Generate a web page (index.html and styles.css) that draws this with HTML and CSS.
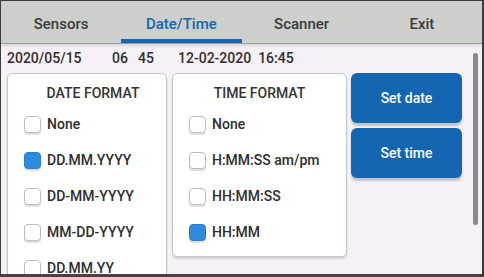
FILE: index.html
```
<!DOCTYPE html>
<html lang="en">
<head>
    <meta charset="UTF-8">
    <meta name="viewport" content="width=device-width, initial-scale=1.0">
    <title>Date/Time settings</title>
    <link rel="stylesheet" href="styles.css">
</head>
<body>
    <div class="frame">
        <div class="tabs">
            <div class="tab">Sensors</div>
            <div class="tab active">Date/Time</div>
            <div class="tab">Scanner</div>
            <div class="tab">Exit</div>
        </div>
        <div class="content">
            <div class="now">
                <span class="now-date">2020/05/15</span>
                <span class="now-hm">06</span>
                <span class="now-hm">45</span>
                <span class="now-full">12-02-2020&nbsp; 16:45</span>
            </div>
            <div class="panels">
                <div class="card date-card">
                    <div class="card-title">DATE FORMAT</div>
                    <label class="option"><span class="box"></span>None</label>
                    <label class="option"><span class="box checked"></span>DD.MM.YYYY</label>
                    <label class="option"><span class="box"></span>DD-MM-YYYY</label>
                    <label class="option"><span class="box"></span>MM-DD-YYYY</label>
                    <label class="option"><span class="box"></span>DD.MM.YY</label>
                </div>
                <div class="card time-card">
                    <div class="card-title">TIME FORMAT</div>
                    <label class="option"><span class="box"></span>None</label>
                    <label class="option"><span class="box"></span>H:MM:SS am/pm</label>
                    <label class="option"><span class="box"></span>HH:MM:SS</label>
                    <label class="option"><span class="box checked"></span>HH:MM</label>
                </div>
                <div class="actions">
                    <button class="action">Set date</button>
                    <button class="action">Set time</button>
                </div>
            </div>
            <div class="scroll-thumb"></div>
        </div>
    </div>
</body>
</html>
```

FILE: styles.css
```
body {
    margin: 0;
    font-family: Roboto, "Liberation Sans", sans-serif;
    color: #333;
}
.frame {
    width: 484px;
    height: 277px;
    box-sizing: border-box;
    border: 1px solid #3c3c3c;
    border-right: 2px solid #3c3c3c;
    border-bottom: 3px solid #444;
    display: flex;
    flex-direction: column;
    overflow: hidden;
    background: #f6f1f6;
}
.tabs {
    display: grid;
    grid-template-columns: repeat(4, 1fr);
    height: 42px;
    background: #cdcfcd;
    border-bottom: 1px solid #9c9e9c;
    box-shadow: 0 2px 3px rgba(0, 0, 0, 0.12);
    position: relative;
    z-index: 1;
}
.tab {
    display: flex;
    justify-content: center;
    align-items: center;
    font-size: 15px;
    font-weight: 500;
    color: #3a3a3a;
    padding: 5px 0 1px;
    box-sizing: border-box;
}
.tab.active {
    color: #1565b0;
    border-bottom: 4px solid #1565b0;
    padding: 8px 0 0;
}
.content {
    flex: 1;
    position: relative;
    padding: 6px 6px 0;
    overflow: hidden;
}
.now {
    display: flex;
    font-size: 14px;
    font-weight: 500;
    line-height: 16px;
    color: #2e2e2e;
}
.now-date {
    width: 105px;
}
.now-hm {
    width: 26px;
}
.now-full {
    margin-left: 14px;
}
.panels {
    display: flex;
    align-items: flex-start;
    margin-top: 7px;
}
.card {
    background: #fff;
    border: 1px solid #c6c6c6;
    border-radius: 5px;
    box-shadow: 0 2px 2px rgba(0, 0, 0, 0.14);
    padding: 11px 0 6px 16px;
}
.date-card {
    width: 142px;
    margin-right: 5px;
}
.time-card {
    width: 157px;
    margin-right: 4px;
}
.card-title {
    text-align: center;
    font-size: 14px;
    font-weight: 500;
    line-height: 16px;
    margin-bottom: 5px;
    padding-right: 16px;
}
.date-card .card-title {
    padding-right: 4px;
}
.option {
    display: flex;
    align-items: center;
    height: 36px;
    font-size: 14px;
    font-weight: 500;
    color: #2e2e2e;
}
.box {
    width: 15px;
    height: 15px;
    border: 1px solid #bdbdbd;
    border-radius: 4px;
    background: #fff;
    box-shadow: 0 2px 1px rgba(0, 0, 0, 0.13);
    margin-right: 6px;
}
.box.checked {
    background: #2f8be0;
    border-color: #2a7ccc;
}
.actions {
    display: flex;
    flex-direction: column;
    gap: 5px;
}
.action {
    width: 111px;
    height: 50px;
    border: none;
    border-radius: 6px;
    background: #1466b2;
    color: #fff;
    font-family: Roboto, "Liberation Sans", sans-serif;
    font-size: 14px;
    font-weight: 500;
    box-shadow: 0 3px 2px rgba(0, 0, 0, 0.2);
}
.scroll-thumb {
    position: absolute;
    left: 472px;
    top: 9px;
    width: 5px;
    height: 172px;
    border-radius: 3px;
    background: #8a8a8a;
}
```
